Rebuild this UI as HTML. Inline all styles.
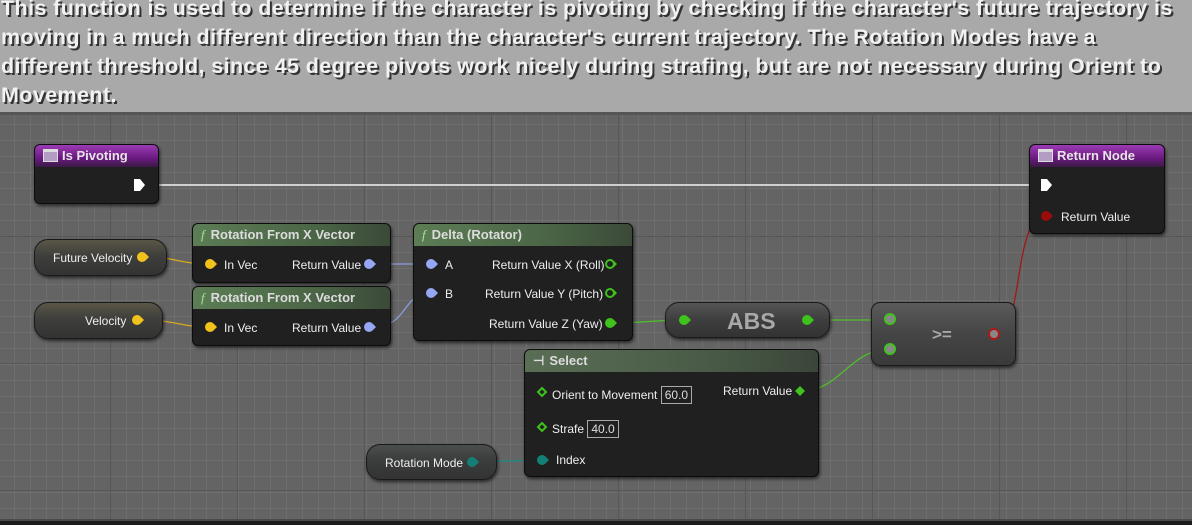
<!DOCTYPE html>
<html><head><meta charset="utf-8"><style>
*{margin:0;padding:0;box-sizing:border-box}
body{width:1192px;height:525px;overflow:hidden;position:relative;font-family:"Liberation Sans",sans-serif;background:#646464}
#cm{position:absolute;left:0;top:-6px;width:1192px;height:118px;background:#a9a9a9;color:#f2f2f2;font-weight:bold;font-size:21.5px;line-height:29px;padding:0 0 0 1px;text-shadow:2px 2px 0 #333;letter-spacing:0.4px;white-space:nowrap;overflow:hidden}
#grid{position:absolute;left:0;top:112px;width:1192px;height:409px;
background-color:#646464;
background-image:
linear-gradient(to right,#575757 1px,transparent 1px),
linear-gradient(to bottom,#575757 1px,transparent 1px),
linear-gradient(to right,#6e6e6e 1px,transparent 1px),
linear-gradient(to bottom,#6e6e6e 1px,transparent 1px);
background-size:127px 127px,127px 127px,16px 16px,16px 16px;
background-position:110px 0,0 124px,14px 0,0 12px}
#grid:before{content:"";position:absolute;left:0;top:0;right:0;height:3px;background:#555}
#bot{position:absolute;left:0;top:519px;width:1192px;height:6px;background:#1c1c1c;border-top:2px solid #4a4a4a}
.n{position:absolute;background:#1f201f;border:1px solid #0c0c0c;border-radius:6px;box-shadow:1px 2px 3px rgba(0,0,0,.6);color:#e8e8e8;font-size:12px;overflow:hidden}
.h{height:22px;line-height:21px;padding-left:8px;font-weight:bold;font-size:13px;color:#e6e6e6}
.hp{background:linear-gradient(#9c3bb4,#6a1a80 60%,#3a1a44)}
.hg{background:linear-gradient(to right,#5c7d55,#4b6646 60%,#3b4a38);color:#dcdcdc}
.ic{display:inline-block;width:15px;height:13px;border:1.5px solid #ddd;background:#b49cc4;vertical-align:-2px;margin-right:4px;border-top-width:3px}
.f{font-style:italic;font-family:"Liberation Serif",serif;color:#a8e09a;margin-right:6px;font-weight:normal}
.t{position:absolute;font-size:12px;color:#eee;white-space:nowrap}
.pill{position:absolute;border-radius:14px;border:1px solid #1a1a1a;background:linear-gradient(#5a5746,#3e3e3c 45%,#333);box-shadow:1px 2px 3px rgba(0,0,0,.6);color:#e8e8e8;font-size:12px}
.box{display:inline-block;border:1px solid #aaa;padding:1px 3px;font-size:12px;color:#ddd}
</style></head><body>
<div id="cm">This function is used to determine if the character is pivoting by checking if the character's future trajectory is<br>moving in a much different direction than the character's current trajectory. The Rotation Modes have a<br>different threshold, since 45 degree pivots work nicely during strafing, but are not necessary during Orient to<br>Movement.</div>
<div id="grid"></div>
<div id="bot"></div>

<svg style="position:absolute;left:0;top:0" width="1192" height="525">
<g fill="none" stroke-width="1.3">
<path d="M150 185 L1040 185" stroke="#cfcfcf" stroke-width="2"/>
<path d="M146 257 C175 257,180 264,210 264" stroke="#d8a820"/>
<path d="M142 320 C175 320,180 327,210 327" stroke="#d8a820"/>
<path d="M372 264 L432 264" stroke="#8c9ce0"/>
<path d="M372 327 C410 327,400 293,432 293" stroke="#8c9ce0"/>
<path d="M612 323 C640 323,660 320,684 320" stroke="#4ec02c"/>
<path d="M810 320 L890 320" stroke="#4ec02c"/>
<path d="M802 391 C840 391,850 349,890 349" stroke="#4ec02c"/>
<path d="M472 462 L542 460" stroke="#1a8a80"/>
<path d="M995 334 C1025 334,1012 216,1046 216" stroke="#a01818"/>
</g>
</svg>

<div class="n" style="left:34px;top:144px;width:125px;height:60px"><div class="h hp"><span class="ic"></span>Is Pivoting</div></div>
<div class="n" style="left:1029px;top:144px;width:136px;height:90px"><div class="h hp"><span class="ic"></span>Return Node</div><div class="t" style="left:31px;top:65px">Return Value</div></div>

<div class="pill" style="left:34px;top:239px;width:133px;height:37px"><span class="t" style="left:18px;top:11px">Future Velocity</span></div>
<div class="pill" style="left:34px;top:302px;width:129px;height:37px"><span class="t" style="left:50px;top:11px">Velocity</span></div>
<div class="pill" style="left:366px;top:444px;width:131px;height:36px;background:linear-gradient(#4a4e4c,#3b3d3c 45%,#333)"><span class="t" style="left:18px;top:11px">Rotation Mode</span></div>

<div class="n" style="left:192px;top:223px;width:199px;height:60px"><div class="h hg"><span class="f">f</span>Rotation From X Vector</div><div class="t" style="left:31px;top:34px">In Vec</div><div class="t" style="left:99px;top:34px">Return Value</div></div>
<div class="n" style="left:192px;top:286px;width:199px;height:60px"><div class="h hg"><span class="f">f</span>Rotation From X Vector</div><div class="t" style="left:31px;top:34px">In Vec</div><div class="t" style="left:99px;top:34px">Return Value</div></div>

<div class="n" style="left:413px;top:223px;width:220px;height:118px"><div class="h hg"><span class="f">f</span>Delta (Rotator)</div>
<div class="t" style="left:31px;top:34px">A</div><div class="t" style="left:31px;top:63px">B</div>
<div class="t" style="left:78px;top:34px">Return Value X (Roll)</div>
<div class="t" style="left:71px;top:63px">Return Value Y (Pitch)</div>
<div class="t" style="left:75px;top:93px">Return Value Z (Yaw)</div></div>

<div class="pill" style="left:665px;top:302px;width:165px;height:36px;background:linear-gradient(#555,#3e3e3e 50%,#333)"><span class="t" style="left:61px;top:5px;font-size:23px;font-weight:bold;color:#a8a8a8">ABS</span></div>
<div class="pill" style="left:871px;top:302px;width:145px;height:64px;border-radius:9px;background:linear-gradient(#5a5a5a,#454545 50%,#3a3a3a)"><span class="t" style="left:60px;top:22px;font-size:17px;font-weight:bold;color:#a8a8a8">&gt;=</span></div>

<div class="n" style="left:524px;top:349px;width:295px;height:128px"><div class="h hg" style="background:linear-gradient(to right,#596e55,#4a5c47 60%,#3b463a)"><span style="margin-right:5px">&#8867;</span>Select</div>
<div class="t" style="left:27px;top:36px">Orient to Movement <span class="box">60.0</span></div>
<div class="t" style="left:198px;top:34px">Return Value</div>
<div class="t" style="left:27px;top:70px">Strafe <span class="box">40.0</span></div>
<div class="t" style="left:31px;top:103px">Index</div></div>

<svg style="position:absolute;left:0;top:0" width="1192" height="525">
<g>
<path d="M134 179 h6 l5 6 l-5 6 h-6z" fill="#fff"/>
<path d="M1041 179 h6 l5 6 l-5 6 h-6z" fill="#fff"/>
<g fill="#f1c21b"><circle cx="142" cy="257" r="5"/><path d="M146 254 l3 3 l-3 3z"/>
<circle cx="137" cy="320" r="5"/><path d="M141 317 l3 3 l-3 3z"/>
<circle cx="210" cy="264" r="5"/><path d="M214 261 l3 3 l-3 3z"/>
<circle cx="210" cy="327" r="5"/><path d="M214 324 l3 3 l-3 3z"/></g>
<g fill="#95a6f2"><circle cx="369" cy="264" r="5"/><path d="M373 261 l3 3 l-3 3z"/>
<circle cx="369" cy="327" r="5"/><path d="M373 324 l3 3 l-3 3z"/>
<circle cx="431" cy="264" r="5"/><path d="M435 261 l3 3 l-3 3z"/>
<circle cx="431" cy="293" r="5"/><path d="M435 290 l3 3 l-3 3z"/></g>
<g fill="none" stroke="#3fc21b" stroke-width="2"><circle cx="610" cy="264" r="4"/><circle cx="610" cy="293" r="4"/></g>
<g fill="#3fc21b"><path d="M614 261 l3 3 l-3 3z"/><path d="M614 290 l3 3 l-3 3z"/>
<circle cx="610" cy="323" r="5"/><path d="M614 320 l3 3 l-3 3z"/>
<circle cx="684" cy="320" r="5"/><path d="M688 317 l3 3 l-3 3z"/>
<circle cx="807" cy="320" r="5"/><path d="M811 317 l3 3 l-3 3z"/>
<path d="M800 386 l5 5 l-5 5 l-5 -5z"/></g>
<g fill="none" stroke="#3fc21b" stroke-width="2"><path d="M542 388 l4 4 l-4 4 l-4 -4z"/><path d="M542 423 l4 4 l-4 4 l-4 -4z"/></g>
<g stroke="#3fc21b" stroke-width="2" fill="#888"><circle cx="890" cy="319" r="5"/><circle cx="890" cy="349" r="5"/></g>
<circle cx="994" cy="334" r="5" stroke="#b01818" stroke-width="2" fill="#888"/>
<circle cx="1046" cy="216" r="5" fill="#9a0c0c"/><path d="M1050 213 l3 3 l-3 3z" fill="#9a0c0c"/>
<g fill="#137f77"><circle cx="472" cy="462" r="5"/><path d="M476 459 l3 3 l-3 3z"/>
<circle cx="542" cy="460" r="5"/><path d="M546 457 l3 3 l-3 3z"/></g>
</g></svg>
</body></html>
